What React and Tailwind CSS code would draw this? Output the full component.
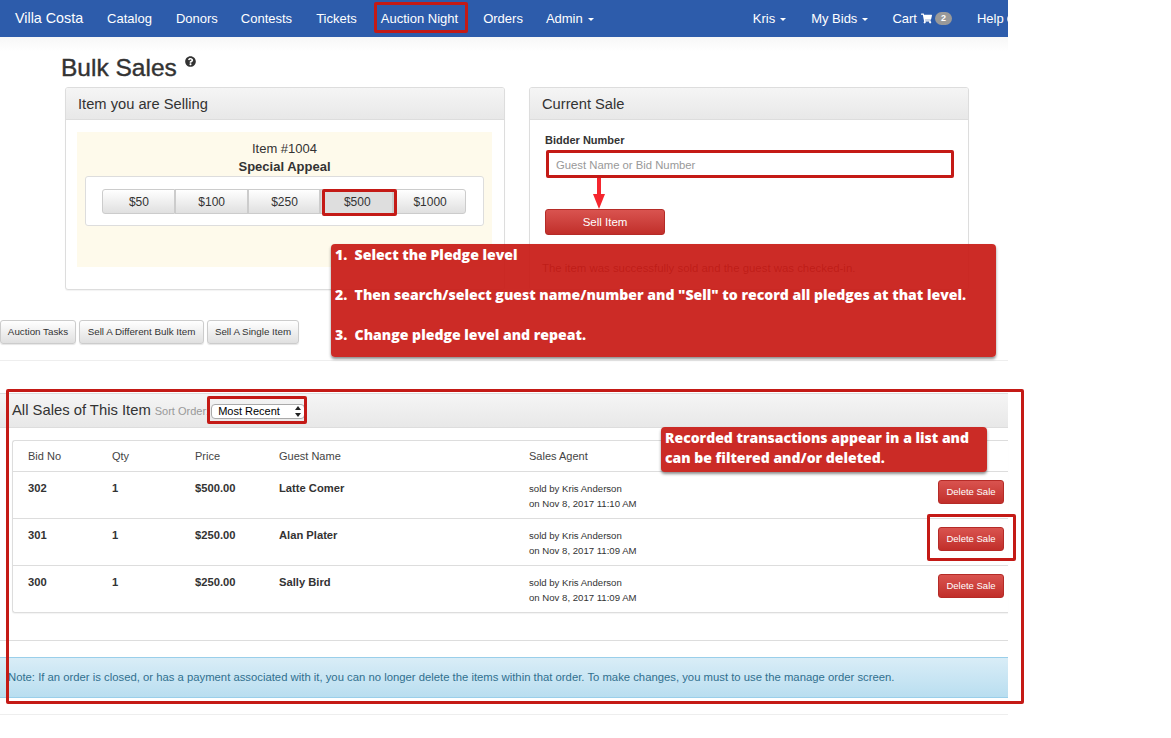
import { FaQuestionCircle, FaShoppingCart } from 'react-icons/fa';

const NAV_LEFT = [
    { label: 'Catalog', className: 'ml-[24px]' },
    { label: 'Donors', className: 'ml-[24px]' },
    { label: 'Contests', className: 'ml-[23px]' },
    { label: 'Tickets', className: 'ml-[24px]' },
    { label: 'Auction Night', className: 'ml-[24px]' },
    { label: 'Orders', className: 'ml-[25px]' },
];

const SALES = [
    { bid: '302', price: '$500.00', guest: 'Latte Comer', time: '11:10 AM' },
    { bid: '301', price: '$250.00', guest: 'Alan Plater', time: '11:09 AM' },
    { bid: '300', price: '$250.00', guest: 'Sally Bird', time: '11:09 AM' },
];

const LEVELS = ['$50', '$100', '$250', '$500', '$1000'];

function Caret() {
    return <span className="ml-[5px] inline-block align-middle border-x-[3px] border-t-[3px] border-x-transparent border-t-white" />;
}

function Panel({ title, children }) {
    return (
        <div className="w-[440px] h-[203px] border border-[#dddddd] rounded-[3px] bg-white shadow-[0_1px_1px_rgba(0,0,0,0.05)] overflow-hidden">
            <div className="h-[32px] pl-[12px] pt-[1px] flex items-center text-[14.7px] text-[#333333] bg-gradient-to-b from-[#f5f5f5] to-[#e8e8e8] border-b border-[#dddddd]">
                {title}
            </div>
            {children}
        </div>
    );
}

function GreyButton({ label, className }) {
    return (
        <button className={`h-[24px] border border-[#cccccc] rounded-[3px] text-[9.8px] text-[#333333] bg-gradient-to-b from-white to-[#e0e0e0] shadow-[0_1px_1px_rgba(0,0,0,0.1)] ${className}`}>
            {label}
        </button>
    );
}

function RedBox({ className }) {
    return <div className={`absolute border-[3px] border-[#c41a16] rounded-[2px] pointer-events-none ${className}`} />;
}

export default function App() {
    return (
        <div className="relative w-[1171px] h-[738px] overflow-hidden bg-white font-['Liberation_Sans',Arial,sans-serif] text-[#333333]">
            <div className="w-[1008px]">
                {/* Navbar */}
                <nav className="h-[37px] bg-[#2d5cab] text-white text-[13px] flex items-center overflow-hidden whitespace-nowrap">
                    <span className="ml-[15px] text-[14.3px]">Villa Costa</span>
                    {NAV_LEFT.map((item) => (
                        <span key={item.label} className={item.className}>{item.label}</span>
                    ))}
                    <span className="ml-[23px]">Admin<Caret /></span>
                    <span className="ml-[159px]">Kris<Caret /></span>
                    <span className="ml-[25px]">My Bids<Caret /></span>
                    <span className="ml-[24px] flex items-center">
                        Cart
                        <FaShoppingCart className="ml-[4px] text-[11px]" />
                        <span className="ml-[3px] w-[17px] h-[13px] rounded-full bg-[#999999] text-[9px] font-bold flex items-center justify-center">2</span>
                    </span>
                    <span className="ml-[25px]">Help</span>
                    <FaQuestionCircle className="ml-[3px] shrink-0 text-[12px]" />
                </nav>

                {/* Title */}
                <div className="h-[50px] pl-[61px] flex items-start bg-gradient-to-b from-[#f7f7f7] to-white to-[30%]">
                    <h1 className="mt-[16px] text-[24.5px] leading-[30px] font-medium text-[#333333] [-webkit-text-stroke:0.4px_#333333]">Bulk Sales</h1>
                    <FaQuestionCircle className="mt-[19px] ml-[8px] text-[11px] text-[#333333]" />
                </div>

                {/* Panels */}
                <div className="flex pl-[65px] gap-[24px]">
                    <Panel title="Item you are Selling">
                        <div className="ml-[11px] mr-[12px] mt-[12px] h-[135px] pt-[8px] bg-[#fefaeb] text-center text-[13px]">
                            <div className="leading-[18px]">Item #1004</div>
                            <div className="leading-[18px] font-bold">Special Appeal</div>
                            <div className="mx-[8px] h-[50px] pl-[16px] pr-[17px] flex items-center bg-white border border-[#dddddd] rounded-[3px]">
                                <div className="flex w-full">
                                    {LEVELS.map((level) => (
                                        <button
                                            key={level}
                                            className={`flex-1 h-[25px] pl-[1px] pt-[1px] border border-[#cccccc] text-[12px] first:rounded-l-[3px] last:rounded-r-[3px] ${level === '$500' ? 'bg-[#dedede]' : 'bg-gradient-to-b from-white to-[#e0e0e0]'}`}
                                        >
                                            {level}
                                        </button>
                                    ))}
                                </div>
                            </div>
                        </div>
                    </Panel>
                    <Panel title="Current Sale">
                        <div className="px-[15px] pt-[14px]">
                            <div className="text-[11px] leading-[13px] font-bold">Bidder Number</div>
                            <input
                                readOnly
                                placeholder="Guest Name or Bid Number"
                                className="mt-[6px] ml-[3px] w-[404px] h-[23px] pl-[8px] text-[11.3px] outline-none placeholder:text-[#999999]"
                            />
                            <button className="mt-[33px] block w-[120px] h-[26px] pt-[1px] border border-[#b52b27] rounded-[3px] text-[11.5px] text-white bg-gradient-to-b from-[#d9534f] to-[#c12e2a]">
                                Sell Item
                            </button>
                            <p className="mt-[25px] -ml-[3px] text-[11.4px] text-black/80 whitespace-nowrap">The item was successfully sold and the guest was checked-in.</p>
                        </div>
                    </Panel>
                </div>

                {/* Page actions */}
                <div className="mt-[30px] flex gap-[3px]">
                    <GreyButton label="Auction Tasks" className="w-[76px]" />
                    <GreyButton label="Sell A Different Bulk Item" className="w-[125px]" />
                    <GreyButton label="Sell A Single Item" className="w-[92px]" />
                </div>
                <div className="mt-[16px] border-t border-[#eeeeee]" />

                {/* All sales */}
                <div className="mt-[32px] h-[35px] pl-[12px] flex items-center bg-gradient-to-b from-[#f5f5f5] to-[#e8e8e8] border-y border-[#dddddd] whitespace-nowrap">
                    <span className="text-[14.8px]">All Sales of This Item</span>
                    <span className="ml-[4px] mt-[1px] text-[11px] text-[#999999]">Sort Order:</span>
                    <div className="ml-[2px] mt-[1px] w-[94px] h-[15px] pl-[6px] pr-[3px] flex items-center justify-between bg-white border border-[#aaaaaa] rounded-[4px] text-[11px] text-black">
                        Most Recent
                        <svg width="6" height="11" viewBox="0 0 6 11" className="fill-[#222222]">
                            <polygon points="3,0 6,4 0,4" />
                            <polygon points="0,7 6,7 3,11" />
                        </svg>
                    </div>
                </div>

                <div className="mt-[12px] ml-[12px] border border-[#dddddd] rounded-l-[3px] border-r-0 shadow-[0_1px_1px_rgba(0,0,0,0.05)]">
                    <div className="h-[30px] grid grid-cols-[84px_83px_84px_250px_1fr] pl-[15px] items-center text-[11px] text-[#444444]">
                        <span>Bid No</span>
                        <span>Qty</span>
                        <span>Price</span>
                        <span>Guest Name</span>
                        <span>Sales Agent</span>
                    </div>
                    {SALES.map((sale) => (
                        <div key={sale.bid} className="h-[47px] grid grid-cols-[84px_83px_84px_250px_1fr] pl-[15px] border-t border-[#dddddd] text-[11.2px] font-bold">
                            <span className="pt-[8px]">{sale.bid}</span>
                            <span className="pt-[8px]">1</span>
                            <span className="pt-[8px]">{sale.price}</span>
                            <span className="pt-[8px]">{sale.guest}</span>
                            <div className="flex justify-between pr-[4px]">
                                <div className="pt-[9px] text-[9.6px] leading-[15px] font-normal">
                                    <div>sold by Kris Anderson</div>
                                    <div>on Nov 8, 2017 {sale.time}</div>
                                </div>
                                <button className="mt-[8px] w-[66px] h-[24px] border border-[#b52b27] rounded-[3px] text-[9.5px] font-normal text-white bg-gradient-to-b from-[#d9534f] to-[#c12e2a]">
                                    Delete Sale
                                </button>
                            </div>
                        </div>
                    ))}
                </div>

                <div className="mt-[27px] border-t border-[#dddddd]" />

                {/* Note */}
                <div className="mt-[16px] h-[41px] pl-[8px] flex items-center border-y border-[#9acfea] bg-gradient-to-b from-[#d9edf7] to-[#b9def0] text-[11.3px] text-[#31708f] whitespace-nowrap">
                    Note: If an order is closed, or has a payment associated with it, you can no longer delete the items within that order. To make changes, you must to use the manage order screen.
                </div>
                <div className="mt-[16px] border-t border-[#eeeeee]" />
            </div>

            {/* Annotations */}
            <RedBox className="left-[374px] top-[2px] w-[94px] h-[31px]" />
            <RedBox className="left-[322px] top-[189px] w-[75px] h-[27px]" />
            <RedBox className="left-[546px] top-[150px] w-[408px] h-[28px]" />
            <RedBox className="left-[207px] top-[396px] w-[100px] h-[28px]" />
            <RedBox className="left-[6px] top-[389px] w-[1018px] h-[315px]" />
            <RedBox className="left-[927px] top-[514px] w-[89px] h-[47px]" />

            <svg width="12" height="31" viewBox="0 0 12 31" className="absolute left-[593px] top-[178px] fill-[#f5262e]">
                <rect x="4" y="0" width="4" height="18" />
                <polygon points="0,16 12,16 6,31" />
            </svg>

            <div className="absolute left-[331px] top-[244px] w-[665px] h-[113px] pl-[4px] pt-[3px] rounded-[4px] bg-[#c81b16]/93 shadow-[0_2px_3px_rgba(0,0,0,0.45)] font-['Open_Sans',sans-serif] font-extrabold text-[14.05px] leading-[16px] text-white whitespace-nowrap">
                <div className="h-[40px]">1.&nbsp; Select the Pledge level</div>
                <div className="h-[40px]">2.&nbsp; Then search/select guest name/number and "Sell" to record all pledges at that level.</div>
                <div>3.&nbsp; Change pledge level and repeat.</div>
            </div>

            <div className="absolute left-[661px] top-[427px] w-[326px] h-[45px] pl-[4px] pt-[1px] rounded-[4px] bg-[#cb2b26] shadow-[0_2px_3px_rgba(0,0,0,0.45)] font-['Open_Sans',sans-serif] font-extrabold text-[14px] leading-[20px] text-white whitespace-nowrap">
                <div>Recorded transactions appear in a list and</div>
                <div>can be filtered and/or deleted.</div>
            </div>
        </div>
    );
}
